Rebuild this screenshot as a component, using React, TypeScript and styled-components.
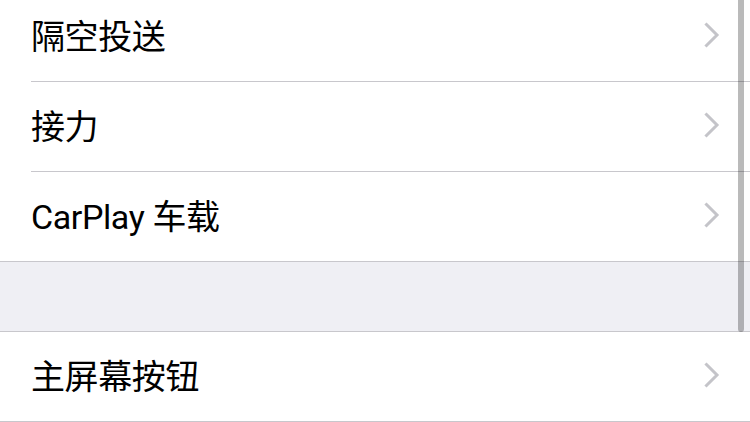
import React from 'react'
import styled, { createGlobalStyle } from 'styled-components'

const GlobalStyle = createGlobalStyle`
  html, body {
    margin: 0;
    padding: 0;
    background: #efeff4;
    overflow: hidden;
  }
  body {
    font-family: Roboto, 'Noto Sans CJK SC', sans-serif;
    -webkit-font-smoothing: antialiased;
  }
`

const Screen = styled.div`
  position: relative;
  width: 750px;
  height: 422px;
  overflow: hidden;
  background: #efeff4;
`

const List = styled.div`
  display: flex;
  flex-direction: column;
  margin-top: -9px;
`

const Group = styled.div`
  display: flex;
  flex-direction: column;
  background: #fff;
  border-top: 1px solid #c8c7cc;
  border-bottom: 1px solid #c8c7cc;
`

const Spacer = styled.div`
  height: 69px;
`

// 89px tall row, content nudged up a little like the iOS cell
const Row = styled.div<{ $last?: boolean }>`
  display: flex;
  align-items: center;
  height: 85px;
  padding-bottom: 4px;
  margin-left: 31px;
  padding-right: 30px;
  border-bottom: ${({ $last }) => ($last ? 'none' : '1px solid #c8c7cc')};
`

const Label = styled.span`
  flex: 1;
  font-size: 34px;
  color: #000;
  letter-spacing: -0.4px;
`

const Chevron = () => (
  <svg width="16" height="26" viewBox="0 0 16 26" fill="none">
    <path d="M2.5 2.5 L13 13 L2.5 23.5" stroke="#c4c4c9" strokeWidth="3" strokeLinecap="square" />
  </svg>
)

const ScrollBar = styled.div`
  position: absolute;
  top: -4px;
  right: 6px;
  width: 6px;
  height: 336px;
  border-radius: 3px;
  background: rgba(0, 0, 0, 0.27);
`

const GROUPS = [['隔空投送', '接力', 'CarPlay 车载'], ['主屏幕按钮']]

const App = () => (
  <Screen>
    <GlobalStyle />
    <List>
      {GROUPS.map((items, gi) => (
        <React.Fragment key={gi}>
          {gi > 0 && <Spacer />}
          <Group>
            {items.map((text, i) => (
              <Row key={text} $last={i === items.length - 1}>
                <Label>{text}</Label>
                <Chevron />
              </Row>
            ))}
          </Group>
        </React.Fragment>
      ))}
    </List>
    <ScrollBar />
  </Screen>
)

export default App
